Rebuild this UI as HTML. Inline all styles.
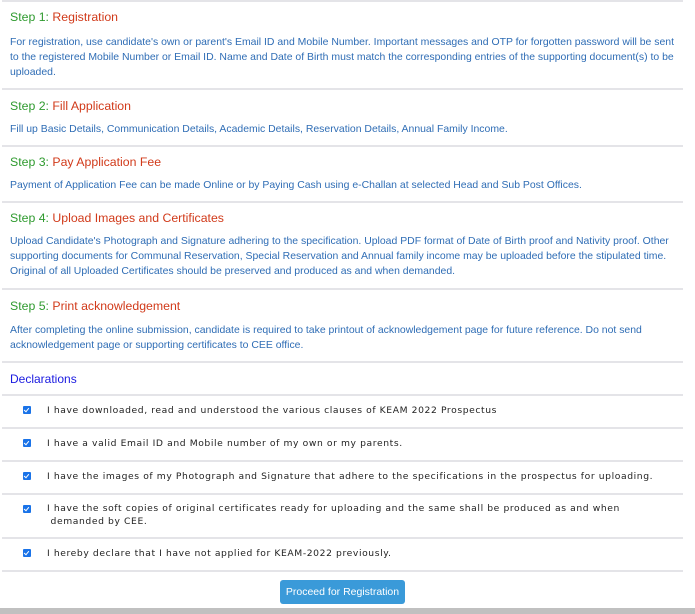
<!DOCTYPE html>
<html><head><meta charset="utf-8"><style>
body{margin:0;width:695px;height:614px;background:#fff;position:relative;overflow:hidden;font-family:"Liberation Sans",sans-serif}
.a{position:absolute;white-space:nowrap}
.t{left:10px;font-size:12.3px;color:#d13a1a}
.t b{font-weight:normal;color:#2e9a2e}
.p{left:10px;font-size:10.45px;color:#2f6db5;line-height:15.2px}
.s{position:absolute;left:2px;width:681px;height:2px;background:#e4e4e8}
.d{left:47px;font-family:"DejaVu Sans",sans-serif;font-size:9.2px;letter-spacing:0.6px;color:#222;line-height:13px}
.c{position:absolute;left:23px;width:8px;height:8px;background:#1a73e8;border-radius:1px}
.c:after{content:"";position:absolute;left:2px;top:1px;width:2px;height:4px;border:solid #fff;border-width:0 1.3px 1.3px 0;transform:rotate(40deg)}
</style></head><body>
<div class="s" style="top:0"></div>
<div class="a t" style="top:10px"><b>Step 1:</b> Registration</div>
<div class="a p" style="top:35px">For registration, use candidate's own or parent's Email ID and Mobile Number. Important messages and OTP for forgotten password will be sent<br>to the registered Mobile Number or Email ID. Name and Date of Birth must match the corresponding entries of the supporting document(s) to be<br>uploaded.</div>
<div class="s" style="top:88px"></div>
<div class="a t" style="top:99px"><b>Step 2:</b> Fill Application</div>
<div class="a p" style="top:122px">Fill up Basic Details, Communication Details, Academic Details, Reservation Details, Annual Family Income.</div>
<div class="s" style="top:145px"></div>
<div class="a t" style="top:155px"><b>Step 3:</b> Pay Application Fee</div>
<div class="a p" style="top:178px">Payment of Application Fee can be made Online or by Paying Cash using e-Challan at selected Head and Sub Post Offices.</div>
<div class="s" style="top:201px"></div>
<div class="a t" style="top:211px"><b>Step 4:</b> Upload Images and Certificates</div>
<div class="a p" style="top:234px">Upload Candidate's Photograph and Signature adhering to the specification. Upload PDF format of Date of Birth proof and Nativity proof. Other<br>supporting documents for Communal Reservation, Special Reservation and Annual family income may be uploaded before the stipulated time.<br>Original of all Uploaded Certificates should be preserved and produced as and when demanded.</div>
<div class="s" style="top:288px"></div>
<div class="a t" style="top:299px"><b>Step 5:</b> Print acknowledgement</div>
<div class="a p" style="top:323px">After completing the online submission, candidate is required to take printout of acknowledgement page for future reference. Do not send<br>acknowledgement page or supporting certificates to CEE office.</div>
<div class="s" style="top:361px"></div>
<div class="a" style="left:10px;top:372px;font-size:12px;color:#1a1ae0">Declarations</div>
<div class="s" style="top:394px"></div>
<div class="c" style="top:406px"></div>
<div class="a d" style="top:404px">I have downloaded, read and understood the various clauses of KEAM 2022 Prospectus</div>
<div class="s" style="top:427px"></div>
<div class="c" style="top:439px"></div>
<div class="a d" style="top:437px">I have a valid Email ID and Mobile number of my own or my parents.</div>
<div class="s" style="top:460px"></div>
<div class="c" style="top:472px"></div>
<div class="a d" style="top:470px">I have the images of my Photograph and Signature that adhere to the specifications in the prospectus for uploading.</div>
<div class="s" style="top:493px"></div>
<div class="c" style="top:505px"></div>
<div class="a d" style="top:502px">I have the soft copies of original certificates ready for uploading and the same shall be produced as and when<br>&nbsp;demanded by CEE.</div>
<div class="s" style="top:537px"></div>
<div class="c" style="top:549px"></div>
<div class="a d" style="top:547px">I hereby declare that I have not applied for KEAM-2022 previously.</div>
<div class="s" style="top:570px"></div>
<div class="a" style="left:280px;top:580px;width:125px;height:24px;background:#3a9ad9;border-radius:3px;color:#fff;font-size:10.5px;line-height:24px;text-align:center">Proceed for Registration</div>
<div class="a" style="left:0;top:608px;width:695px;height:6px;background:#c0c0c0"></div>
</body></html>
